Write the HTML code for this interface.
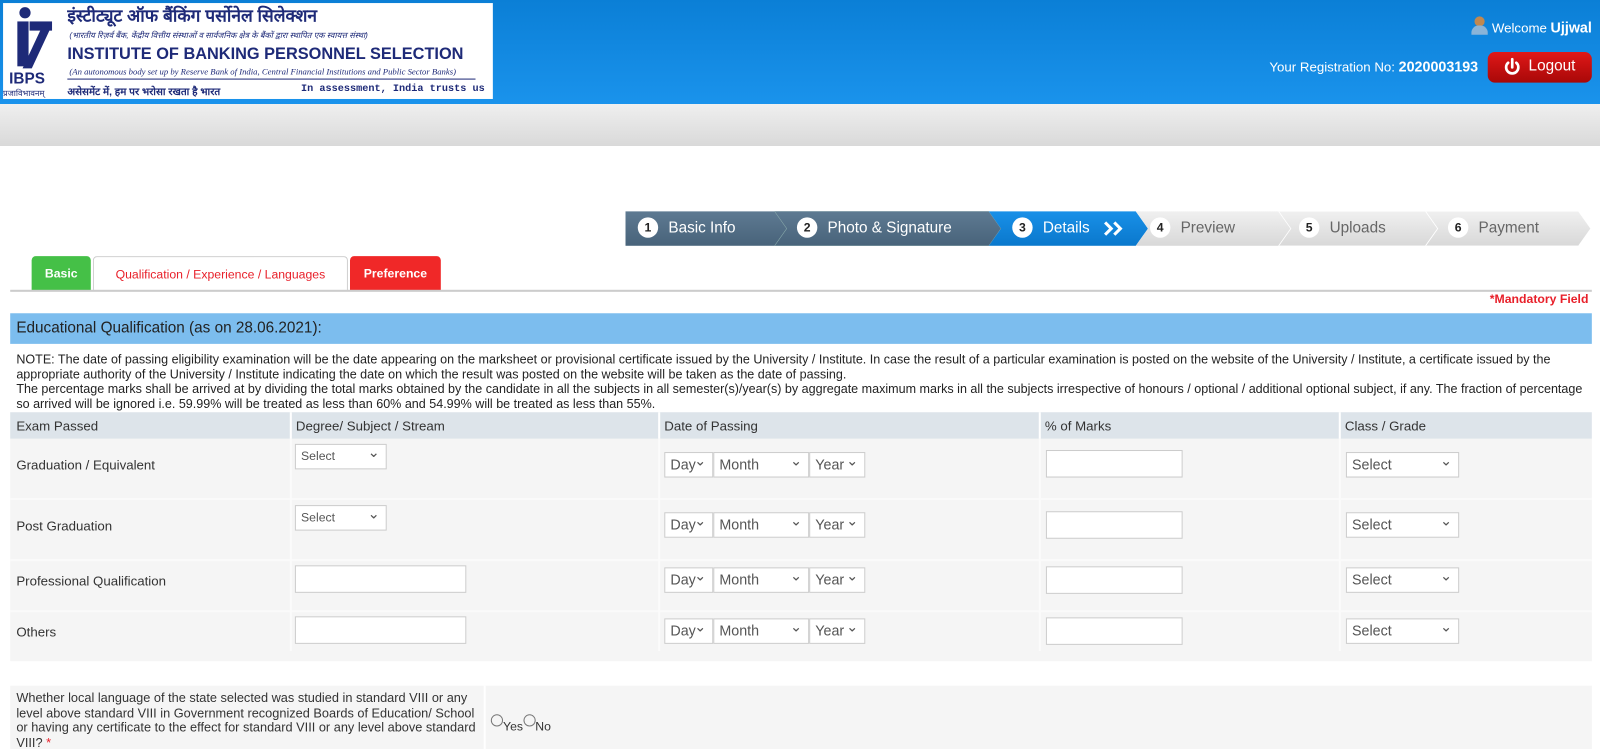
<!DOCTYPE html>
<html><head><meta charset="utf-8"><style>
*{box-sizing:border-box;margin:0;padding:0}
html,body{width:1600px;height:749px;overflow:hidden;background:#fff}
body{font-family:"Liberation Sans",Arial,sans-serif;font-size:13px;color:#333;position:relative}
#w{position:absolute;left:0;top:0;width:1568px;height:734px;transform:scale(1.0204);transform-origin:0 0}
.abs{position:absolute}
.hdr{left:0;top:0;width:1600px;height:102px;background:linear-gradient(#0b7fd6,#1a93ec)}
.logo{left:3px;top:3px;width:480px;height:94px;background:#fff;font-family:"Liberation Sans","Noto Sans CJK SC",sans-serif;color:#1e2a78}
.band{left:0;top:102px;width:1600px;height:41px;background:linear-gradient(#efefef,#d9d9d9)}
.step{top:207px;height:33px;color:#fff;font-size:15px;line-height:33px}
.num{display:inline-block;width:20px;height:20px;border-radius:50%;background:#fff;color:#222;font-size:12px;font-weight:bold;text-align:center;line-height:20px;margin-right:10px;vertical-align:middle;position:relative;top:-1px}
.tab{top:251px;height:34px;line-height:34px;font-size:12px;font-weight:bold;text-align:center;border-radius:4px 4px 0 0}
.sel{position:absolute;height:25px;border:1px solid #ccc;background:#fff;color:#555;font-size:14px;line-height:23px;padding-left:5px}
.sel:after{content:"⌄";position:absolute;right:6px;top:-4px;font-size:14px}
.inp{position:absolute;height:27px;border:1px solid #ccc;background:#fff}
.lbl{position:absolute;font-size:13px;color:#333}
</style></head><body>
<div class="abs hdr" style="height:105px"></div>
<div class="abs band" style="top:104px;height:42px"></div>
<div id="w">
<div class="abs logo">
 <div class="abs" style="left:6px;top:4px;width:44px;height:80px">
  <div class="abs" style="left:10px;top:0;width:11px;height:11px;border-radius:50%;background:#1e2a78"></div>
  <div class="abs" style="left:8px;top:14px;width:11px;height:44px;background:#1e2a78"></div>
  <div class="abs" style="left:20px;top:14px;width:22px;height:9px;background:#1e2a78"></div>
  <div class="abs" style="left:22px;top:22px;width:9px;height:38px;background:#1e2a78;transform:skewX(-25deg)"></div>
  <div class="abs" style="left:0;top:62px;font-size:15px;font-weight:bold">IBPS</div>
 </div>
 <div class="abs" style="left:0;top:83px;font-size:8px">प्रजाविभावनम्</div>
 <div class="abs" style="left:63px;top:0;font-size:17px;font-weight:bold">इंस्टीट्यूट ऑफ बैंकिंग पर्सोनेल सिलेक्शन</div>
 <div class="abs" style="left:65px;top:26px;font-size:8px;font-style:italic">(भारतीय रिज़र्व बैंक, केंद्रीय वित्तीय संस्थाओं व सार्वजनिक क्षेत्र के बैंकों द्वारा स्थापित एक स्वायत्त संस्था)</div>
 <div class="abs" style="left:63px;top:42px;font-size:16px;font-weight:bold">INSTITUTE OF BANKING PERSONNEL SELECTION</div>
 <div class="abs" style="left:65px;top:62px;font-size:8.5px;font-style:italic;font-family:'Liberation Serif',serif">(An autonomous body set up by Reserve Bank of India, Central Financial Institutions and Public Sector Banks)</div>
 <div class="abs" style="left:63px;top:74px;width:400px;border-top:1px solid #1e2a78"></div>
 <div class="abs" style="left:63px;top:79px;font-size:10px;font-weight:bold">असेसमेंट में, हम पर भरोसा रखता है भारत</div>
 <div class="abs" style="left:292px;top:79px;font-size:10px;font-weight:bold;font-family:'Liberation Mono',monospace">In assessment, India trusts us</div>
</div>
<div class="abs" style="left:1442px;top:16px;width:16px;height:18px"><div class="abs" style="left:3px;top:0;width:10px;height:10px;border-radius:50%;background:#c08850"></div><div class="abs" style="left:0;top:9px;width:16px;height:9px;border-radius:7px 7px 0 0;background:#8ab4d8"></div></div>
<div class="abs" style="left:1462px;top:19px;color:#fff;font-size:13px">Welcome <b style="font-size:14px">Ujjwal</b></div>
<div class="abs" style="left:1244px;top:57px;color:#fff;font-size:13px">Your Registration No: <b style="font-size:14px">2020003193</b></div>
<div class="abs" style="left:1458px;top:51px;width:102px;height:30px;border-radius:7px;background:linear-gradient(#e01818,#a80808);color:#fff;font-size:15px;line-height:28px;padding-left:40px">Logout</div>
<svg class="abs" style="left:1472px;top:56px" width="20" height="20" viewBox="0 0 20 20"><path d="M6 5.5A6 6 0 1 0 14 5.5" fill="none" stroke="#fff" stroke-width="2.6" stroke-linecap="round"/><path d="M10 2v8" stroke="#fff" stroke-width="2.6" stroke-linecap="round"/></svg>

<svg class="abs" style="left:613px;top:207px" width="947" height="34" viewBox="0 0 947 34">
<defs><linearGradient id="g1" x1="0" y1="0" x2="0" y2="1"><stop offset="0" stop-color="#5e7a92"/><stop offset="1" stop-color="#48637a"/></linearGradient>
<linearGradient id="g2" x1="0" y1="0" x2="0" y2="1"><stop offset="0" stop-color="#1990e8"/><stop offset="1" stop-color="#0a78cc"/></linearGradient>
<linearGradient id="g3" x1="0" y1="0" x2="0" y2="1"><stop offset="0" stop-color="#f0f0f0"/><stop offset="1" stop-color="#d8d8d8"/></linearGradient></defs>
<path d="M0 0H146L158 17L146 34H0Z" fill="url(#g1)"/>
<path d="M146 0H356L368 17L356 34H146L158 17Z" fill="url(#g1)" stroke="#8aa" stroke-width=".5"/>
<path d="M356 0H500L512 17L500 34H356L368 17Z" fill="url(#g2)"/>
<path d="M500 0H640L652 17L640 34H500L512 17Z" fill="url(#g3)"/>
<path d="M640 0H784L796 17L784 34H640L652 17Z" fill="url(#g3)" stroke="#fff" stroke-width=".8"/>
<path d="M784 0H934L946 17L934 34H784L796 17Z" fill="url(#g3)" stroke="#fff" stroke-width=".8"/>
<path d="M470 11l6 6-6 6M479 11l6 6-6 6" fill="none" stroke="#fff" stroke-width="3"/>
</svg>
<div class="abs step" style="left:625px"><span class="num">1</span>Basic Info</div>
<div class="abs step" style="left:781px"><span class="num">2</span>Photo &amp; Signature</div>
<div class="abs step" style="left:992px"><span class="num">3</span>Details</div>
<div class="abs step" style="left:1127px;color:#666"><span class="num">4</span>Preview</div>
<div class="abs step" style="left:1273px;color:#666"><span class="num">5</span>Uploads</div>
<div class="abs step" style="left:1419px;color:#666"><span class="num">6</span>Payment</div>

<div class="abs tab" style="left:31px;width:58px;background:#45c047;color:#fff">Basic</div>
<div class="abs tab" style="left:91px;width:250px;background:#fff;border:1px solid #ccc;border-bottom:none;color:#e8202a;font-weight:normal">Qualification / Experience / Languages</div>
<div class="abs tab" style="left:343px;width:89px;background:#f02828;color:#fff">Preference</div>
<div class="abs" style="left:10px;top:284px;width:1550px;height:2px;background:#ccc"></div>
<div class="abs" style="left:1460px;top:286px;color:#e8202a;font-size:12px;font-weight:bold">*Mandatory Field</div>

<div class="abs" style="left:10px;top:307px;width:1550px;height:30px;background:#7cbdee;font-size:15px;color:#222;line-height:30px;padding-left:6px">Educational Qualification (as on 28.06.2021):</div>
<div class="abs" style="left:16px;top:345px;width:1542px;font-size:12.3px;line-height:14.5px;color:#222">NOTE: The date of passing eligibility examination will be the date appearing on the marksheet or provisional certificate issued by the University / Institute. In case the result of a particular examination is posted on the website of the University / Institute, a certificate issued by the appropriate authority of the University / Institute indicating the date on which the result was posted on the website will be taken as the date of passing.<br>The percentage marks shall be arrived at by dividing the total marks obtained by the candidate in all the subjects in all semester(s)/year(s) by aggregate maximum marks in all the subjects irrespective of honours / optional / additional optional subject, if any. The fraction of percentage so arrived will be ignored i.e. 59.99% will be treated as less than 60% and 54.99% will be treated as less than 55%.</div>

<div class="abs" style="left:10px;top:404px;width:1550px;height:26px;background:#dde4ea"></div>
<div class="abs" style="left:284px;top:404px;width:2px;height:26px;background:#fff"></div>
<div class="abs" style="left:645px;top:404px;width:2px;height:26px;background:#fff"></div>
<div class="abs" style="left:1018px;top:404px;width:2px;height:26px;background:#fff"></div>
<div class="abs" style="left:1312px;top:404px;width:2px;height:26px;background:#fff"></div>
<div class="lbl" style="left:16px;top:410px">Exam Passed</div>
<div class="lbl" style="left:290px;top:410px">Degree/ Subject / Stream</div>
<div class="lbl" style="left:651px;top:410px">Date of Passing</div>
<div class="lbl" style="left:1024px;top:410px">% of Marks</div>
<div class="lbl" style="left:1318px;top:410px">Class / Grade</div>

<div class="abs" style="left:10px;top:430px;width:1550px;height:218px;background:#f5f5f5"></div>
<div class="abs" style="left:10px;top:488px;width:1550px;height:2px;background:#fafafa"></div>
<div class="abs" style="left:10px;top:548px;width:1550px;height:2px;background:#fafafa"></div>
<div class="abs" style="left:10px;top:598px;width:1550px;height:2px;background:#fafafa"></div>
<div class="abs" style="left:284px;top:430px;width:2px;height:208px;background:#fbfbfb"></div>
<div class="abs" style="left:645px;top:430px;width:2px;height:208px;background:#fbfbfb"></div>
<div class="abs" style="left:1018px;top:430px;width:2px;height:208px;background:#fbfbfb"></div>
<div class="abs" style="left:1312px;top:430px;width:2px;height:208px;background:#fbfbfb"></div>

<div class="lbl" style="left:16px;top:448px">Graduation / Equivalent</div>
<div class="sel" style="left:289px;top:435px;width:90px;font-size:12px">Select</div>
<div class="sel" style="left:651px;top:443px;width:48px">Day</div><div class="sel" style="left:699px;top:443px;width:94px">Month</div><div class="sel" style="left:793px;top:443px;width:55px">Year</div>
<div class="inp" style="left:1025px;top:441px;width:134px"></div>
<div class="sel" style="left:1319px;top:443px;width:111px">Select</div>

<div class="lbl" style="left:16px;top:508px">Post Graduation</div>
<div class="sel" style="left:289px;top:495px;width:90px;font-size:12px">Select</div>
<div class="sel" style="left:651px;top:502px;width:48px">Day</div><div class="sel" style="left:699px;top:502px;width:94px">Month</div><div class="sel" style="left:793px;top:502px;width:55px">Year</div>
<div class="inp" style="left:1025px;top:501px;width:134px"></div>
<div class="sel" style="left:1319px;top:502px;width:111px">Select</div>

<div class="lbl" style="left:16px;top:562px">Professional Qualification</div>
<div class="inp" style="left:289px;top:554px;width:168px"></div>
<div class="sel" style="left:651px;top:556px;width:48px">Day</div><div class="sel" style="left:699px;top:556px;width:94px">Month</div><div class="sel" style="left:793px;top:556px;width:55px">Year</div>
<div class="inp" style="left:1025px;top:555px;width:134px"></div>
<div class="sel" style="left:1319px;top:556px;width:111px">Select</div>

<div class="lbl" style="left:16px;top:612px">Others</div>
<div class="inp" style="left:289px;top:604px;width:168px"></div>
<div class="sel" style="left:651px;top:606px;width:48px">Day</div><div class="sel" style="left:699px;top:606px;width:94px">Month</div><div class="sel" style="left:793px;top:606px;width:55px">Year</div>
<div class="inp" style="left:1025px;top:605px;width:134px"></div>
<div class="sel" style="left:1319px;top:606px;width:111px">Select</div>

<div class="abs" style="left:10px;top:672px;width:1550px;height:77px;background:#f5f5f5"></div>
<div class="abs" style="left:474px;top:672px;width:2px;height:77px;background:#fff"></div>
<div class="lbl" style="left:16px;top:677px;width:455px;font-size:12.5px;line-height:14.5px">Whether local language of the state selected was studied in standard VIII or any level above standard VIII in Government recognized Boards of Education/ School or having any certificate to the effect for standard VIII or any level above standard VIII? <span style="color:#e8202a">*</span></div>
<div class="lbl" style="left:481px;top:700px;font-size:12px"><span style="display:inline-block;width:12px;height:12px;border:1px solid #777;border-radius:50%"></span><span style="position:relative;top:4px">Yes</span><span style="display:inline-block;width:12px;height:12px;border:1px solid #777;border-radius:50%"></span><span style="position:relative;top:4px">No</span></div>
</div>
</body></html>
